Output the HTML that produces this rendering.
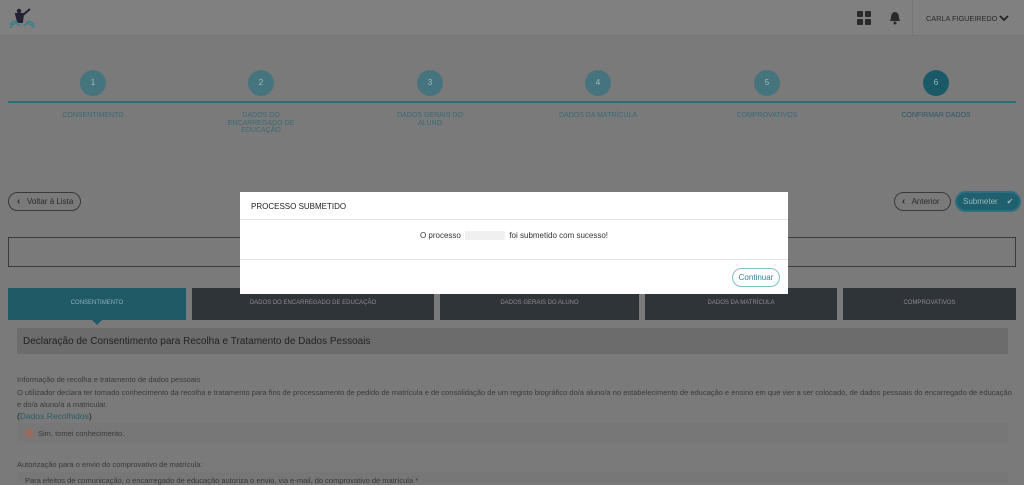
<!DOCTYPE html>
<html><head><meta charset="utf-8"><style>
*{margin:0;padding:0;box-sizing:border-box}
body{width:1024px;height:483px;overflow:hidden;background:#7a7a7a;font-family:"Liberation Sans",sans-serif;position:relative}
.a{position:absolute}
.hdr{left:0;top:0;width:1024px;height:36px;background:#808080;border-bottom:1px solid #767676}
.c{width:26px;height:26px;border-radius:50%;background:#46747e;color:#a0bcc1;font-size:8px;text-align:center;line-height:26px}
.lbl{width:120px;text-align:center;color:#3a6a74;font-size:7px;line-height:7.5px}
.tab{top:288px;height:32px;background:#2f3438;color:#8a8d90;font-size:6px;text-align:center;line-height:30px}
.btn{border:1px solid #3a3a3a;border-radius:11px;height:19px;font-size:8px;color:#2b2b2b;line-height:17px}
.t{color:#3a3a3a;font-size:7.5px;left:17px}
</style></head><body>
<div class="a hdr"></div>
<svg class="a" style="left:8px;top:6px" width="28" height="24" viewBox="0 0 28 24"><circle cx="11" cy="5" r="2.2" fill="#223"/><path d="M8 8 L15 8 L14 16 L10 16 Z M15 9 L22 3" stroke="#223" stroke-width="2" fill="#223"/><path d="M2 22 Q7 14 12 20 M2 19 Q6 13 10 17 M26 22 Q21 14 16 20 M26 19 Q22 13 18 17" stroke="#3a7f8a" stroke-width="1.5" fill="none"/></svg>
<div class="a" style="left:857px;top:11px;width:14px;height:14px;display:grid;grid-template-columns:6px 6px;gap:2px"><i style="background:#2a2a2a;border-radius:1px"></i><i style="background:#2a2a2a;border-radius:1px"></i><i style="background:#2a2a2a;border-radius:1px"></i><i style="background:#2a2a2a;border-radius:1px"></i></div>
<svg class="a" style="left:889px;top:11px" width="12" height="14" viewBox="0 0 12 14"><path d="M6 1 C3 1 2 4 2 7 L1 10 L11 10 L10 7 C10 4 9 1 6 1Z" fill="#2a2a2a"/><circle cx="6" cy="12" r="1.5" fill="#2a2a2a"/></svg>
<div class="a" style="left:912px;top:0;width:1px;height:36px;background:#767676"></div>
<div class="a" style="left:926px;top:14px;font-size:7.3px;color:#2a2a2a">CARLA FIGUEIREDO</div>
<svg class="a" style="left:999px;top:14px" width="10" height="8" viewBox="0 0 10 8"><path d="M1 2 L5 6 L9 2" stroke="#222" stroke-width="1.8" fill="none"/></svg>

<div class="a" style="left:8px;top:101px;width:1008px;height:2px;background:#2a6e7a"></div>
<div class="a c" style="left:80px;top:70px">1</div>
<div class="a c" style="left:248px;top:70px">2</div>
<div class="a c" style="left:417px;top:70px">3</div>
<div class="a c" style="left:585px;top:70px">4</div>
<div class="a c" style="left:754px;top:70px">5</div>
<div class="a c" style="left:923px;top:70px;background:#1a5a68">6</div>
<div class="a lbl" style="left:33px;top:112px">CONSENTIMENTO</div>
<div class="a lbl" style="left:216px;top:112px;width:90px">DADOS DO ENCARREGADO DE EDUCAÇÃO</div>
<div class="a lbl" style="left:385px;top:112px;width:90px">DADOS GERAIS DO ALUNO</div>
<div class="a lbl" style="left:538px;top:112px">DADOS DA MATRÍCULA</div>
<div class="a lbl" style="left:707px;top:112px">COMPROVATIVOS</div>
<div class="a lbl" style="left:876px;top:112px;color:#2a5862">CONFIRMAR DADOS</div>

<div class="a btn" style="left:8px;top:192px;width:73px;padding-left:8px"><b style="font-size:10px">‹</b>&nbsp;&nbsp; Voltar à Lista</div>
<div class="a btn" style="left:894px;top:192px;width:57px;padding-left:7px"><b style="font-size:10px">‹</b>&nbsp;&nbsp; Anterior</div>
<div class="a" style="left:955px;top:191px;width:66px;height:21px;border-radius:11px;background:#1f5f6e;border:2px solid #2c6f80;color:#9ab7be;font-size:8px;line-height:17px;padding-left:6px">Submeter &nbsp;&nbsp;&nbsp;✔</div>

<div class="a" style="left:8px;top:237px;width:1008px;height:30px;border:1px solid #3a3a3a"></div>

<div class="a tab" style="left:8px;width:178px;background:#1f5a66;color:#8fb0b6">CONSENTIMENTO</div>
<div class="a" style="left:92px;top:320px;width:0;height:0;border:5px solid transparent;border-top-color:#1f5a66"></div>
<div class="a tab" style="left:192px;width:242px">DADOS DO ENCARREGADO DE EDUCAÇÃO</div>
<div class="a tab" style="left:440px;width:199px">DADOS GERAIS DO ALUNO</div>
<div class="a tab" style="left:645px;width:192px">DADOS DA MATRÍCULA</div>
<div class="a tab" style="left:843px;width:173px">COMPROVATIVOS</div>

<div class="a" style="left:17px;top:328px;width:991px;height:26px;background:#6c6c6c;font-size:10px;color:#222;padding:8px 0 0 6px">Declaração de Consentimento para Recolha e Tratamento de Dados Pessoais</div>
<div class="a t" style="top:375px">Informação de recolha e tratamento de dados pessoais</div>
<div class="a t" style="top:387px;width:1000px;line-height:12px">O utilizador declara ter tomado conhecimento da recolha e tratamento para fins de processamento de pedido de matrícula e de consolidação de um registo biográfico do/a aluno/a no estabelecimento de educação e ensino em que vier a ser colocado, de dados pessoais do encarregado de educação e do/a aluno/a a matricular.</div>
<div class="a t" style="top:411px;font-size:8.5px;color:#222">(<span style="color:#2a5f68">Dados Recolhidos</span>)</div>
<div class="a" style="left:17px;top:423px;width:991px;height:20px;background:#777"></div>
<div class="a" style="left:25px;top:429px;width:8px;height:8px;background:#9a6a60;border-radius:2px"></div>
<div class="a t" style="left:38px;top:429px">Sim, tomei conhecimento.</div>
<div class="a t" style="top:460px">Autorização para o envio do comprovativo de matrícula:</div>
<div class="a" style="left:17px;top:472px;width:991px;height:11px;background:#777"></div>
<div class="a t" style="left:25px;top:476px">Para efeitos de comunicação, o encarregado de educação autoriza o envio, via e-mail, do comprovativo de matrícula *</div>

<div class="a" style="left:240px;top:192px;width:548px;height:102px;background:#fff">
<div style="height:28px;border-bottom:1px solid #e4e4e4;font-size:8px;color:#222;padding:10px 0 0 11px">PROCESSO SUBMETIDO</div>
<div style="height:40px;border-bottom:1px solid #e4e4e4;font-size:8px;color:#333;text-align:center;padding-top:11px">O processo <span style="display:inline-block;width:40px;height:9px;background:#f0f0f0;vertical-align:middle;margin:0 2px"></span> foi submetido com sucesso!</div>
<div class="a" style="left:492px;top:76px;width:48px;height:19px;border:1px solid #7cc0cc;border-radius:10px;color:#2f8797;font-size:8px;text-align:center;line-height:17px">Continuar</div>
</div>
</body></html>
